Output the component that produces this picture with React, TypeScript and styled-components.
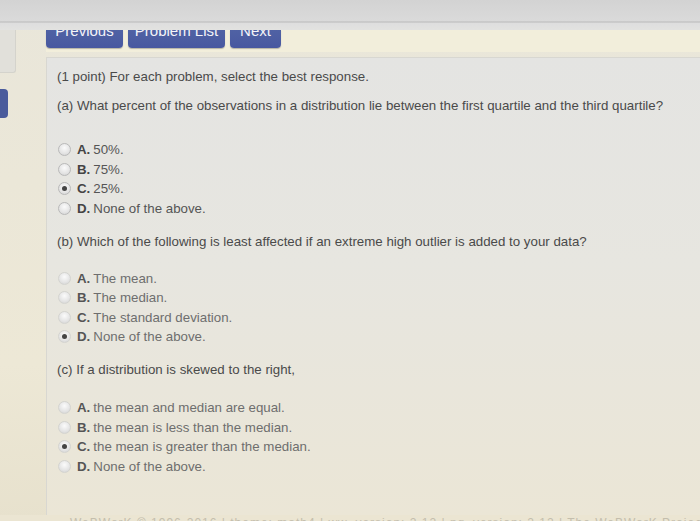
import styled, { createGlobalStyle } from "styled-components"

const Global = createGlobalStyle`
  html, body {
    margin: 0;
    padding: 0;
    background: #ece8d8;
    overflow: hidden;
  }
  body {
    font-family: "Liberation Sans", Arial, sans-serif;
  }
`

const Page = styled.div`
  width: 700px;
  height: 521px;
  display: flex;
  flex-direction: column;
  overflow: hidden;
  background: linear-gradient(180deg, #e9e6da 0%, #ede8d6 70%, #e7e1cd 100%);
`

const TopBar = styled.div`
  height: 30px;
  flex: none;
  background: linear-gradient(180deg, #d3d3d3 0px, #dadada 21px, #b9b9b9 22px, #dedede 23px, #e2e2e0 30px);
`

const Body = styled.div`
  flex: 1;
  display: flex;
  min-height: 0;
`

const Sidebar = styled.div`
  width: 46px;
  flex: none;
  display: flex;
  flex-direction: column;
`

const SideBox = styled.div`
  width: 15px;
  height: 42px;
  background: #e1e0da;
  border-right: 1px solid #d4d3cc;
  border-bottom: 1px solid #d4d3cc;
  border-bottom-right-radius: 3px;
`

const SideTab = styled.div`
  width: 8px;
  height: 29px;
  margin-top: 16px;
  background: #4a5b9c;
  border-top-right-radius: 4px;
  border-bottom-right-radius: 4px;
`

const Main = styled.div`
  flex: 1;
  display: flex;
  flex-direction: column;
  min-width: 0;
`

const NavRow = styled.div`
  height: 22px;
  display: flex;
  gap: 5px;
  background: #f2eedb;
`

const NavButton = styled.div<{ $w: number }>`
  width: ${(p) => p.$w}px;
  height: 18px;
  overflow: hidden;
  background: linear-gradient(180deg, #5062a4, #4858a0);
  border-radius: 0 0 4px 4px;
  color: #f4f4f8;
  font-size: 15px;
  text-align: center;
  box-shadow: 0 1px 1px rgba(0, 0, 0, 0.25);

  span {
    display: block;
    line-height: 16px;
    margin-top: -7px;
  }
`

const Panel = styled.div`
  flex: 1;
  margin-top: 5px;
  padding: 11px 0 0 10px;
  background: linear-gradient(180deg, #e4e4e2 0%, #e7e6e0 45%, #ebe6d6 100%);
  border-top: 1px solid #d8d7d1;
  border-left: 1px solid #d8d7d1;
  color: #4c4c4c;
  font-size: 13.3px;
`

const Prompt = styled.p<{ $gap: number }>`
  margin: ${(p) => p.$gap}px 0 0;
  line-height: 16px;
  white-space: nowrap;
  color: #4a4a4a;
`

const OptionList = styled.ul<{ $gap: number }>`
  list-style: none;
  margin: ${(p) => p.$gap}px 0 0;
  padding: 0 0 0 1px;
`

const Option = styled.li<{ $fade: number }>`
  height: 19.6px;
  display: flex;
  align-items: center;
  gap: 6px;
  color: ${(p) => (p.$fade ? "#6e6e6e" : "#555")};

  b {
    color: ${(p) => (p.$fade ? "#555" : "#444")};
    margin-right: 3px;
  }
`

const Radio = styled.span<{ $checked: boolean; $fade: number }>`
  width: 11px;
  height: 11px;
  border-radius: 50%;
  flex: none;
  background: radial-gradient(circle at 50% 35%, #fbfbfb 0%, #e4e4e4 60%, #cfcfcf 100%);
  border: 1px solid ${(p) => (p.$fade ? "#d4d4d0" : "#b9b9b9")};
  display: flex;
  align-items: center;
  justify-content: center;

  &::after {
    content: "";
    width: 5px;
    height: 5px;
    border-radius: 50%;
    background: ${(p) => (p.$checked ? "#444" : "transparent")};
  }
`

const Footer = styled.div`
  height: 6px;
  flex: none;
  overflow: hidden;
  background: #ebe5d2;
  color: #c4bead;
  font-size: 12px;
  padding-left: 70px;
  white-space: nowrap;
  span {
    display: block;
    line-height: 14px;
    margin-top: 1px;
    letter-spacing: 1px;
  }
`

type Question = {
  prompt: string
  promptGap: number
  listGap: number
  fade: number
  checked: number
  options: [string, string][]
}

const questions: Question[] = [
  {
    prompt:
      "(a) What percent of the observations in a distribution lie between the first quartile and the third quartile?",
    promptGap: 13,
    listGap: 26,
    fade: 0,
    checked: 2,
    options: [
      ["A.", "50%."],
      ["B.", "75%."],
      ["C.", "25%."],
      ["D.", "None of the above."],
    ],
  },
  {
    prompt: "(b) Which of the following is least affected if an extreme high outlier is added to your data?",
    promptGap: 16,
    listGap: 18,
    fade: 1,
    checked: 3,
    options: [
      ["A.", "The mean."],
      ["B.", "The median."],
      ["C.", "The standard deviation."],
      ["D.", "None of the above."],
    ],
  },
  {
    prompt: "(c) If a distribution is skewed to the right,",
    promptGap: 15,
    listGap: 20,
    fade: 1,
    checked: 2,
    options: [
      ["A.", "the mean and median are equal."],
      ["B.", "the mean is less than the median."],
      ["C.", "the mean is greater than the median."],
      ["D.", "None of the above."],
    ],
  },
]

export default function App() {
  return (
    <Page>
      <Global />
      <TopBar />
      <Body>
        <Sidebar>
          <SideBox />
          <SideTab />
        </Sidebar>
        <Main>
          <NavRow>
            <NavButton $w={77}>
              <span>Previous</span>
            </NavButton>
            <NavButton $w={97}>
              <span>Problem List</span>
            </NavButton>
            <NavButton $w={51}>
              <span>Next</span>
            </NavButton>
          </NavRow>
          <Panel>
            <Prompt $gap={0}>(1 point) For each problem, select the best response.</Prompt>
            {questions.map((q) => (
              <div key={q.prompt}>
                <Prompt $gap={q.promptGap}>{q.prompt}</Prompt>
                <OptionList $gap={q.listGap}>
                  {q.options.map(([letter, text], i) => (
                    <Option key={letter} $fade={q.fade}>
                      <Radio $checked={i === q.checked} $fade={q.fade} />
                      <span>
                        <b>{letter}</b>
                        {text}
                      </span>
                    </Option>
                  ))}
                </OptionList>
              </div>
            ))}
          </Panel>
        </Main>
      </Body>
      <Footer>
        <span>WeBWorK © 1996-2016 | theme: math4 | ww_version: 2.12 | pg_version: 2.12 | The WeBWorK Project</span>
      </Footer>
    </Page>
  )
}
